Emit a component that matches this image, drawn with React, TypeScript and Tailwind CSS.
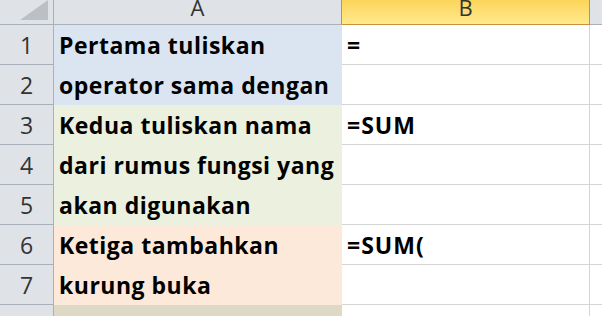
import React from 'react';

const rowNums = [1, 2, 3, 4, 5, 6, 7, 8];

const cellText = 'text-[23px] font-bold leading-[40px] tracking-[0.5px] text-black whitespace-nowrap';

const Sheet = () => {
  return (
    <div
      className="w-[602px] h-[316px] overflow-hidden bg-white"
      style={{ fontFamily: '"Open Sans", "Noto Sans", sans-serif' }}
    >
      {/* column headers */}
      <div className="flex h-[25px]">
        <div className="w-[54px] h-[25px] flex-none flex items-end justify-end pr-[5px] pb-[4px] bg-[#dfe3e8] border-r border-b border-[#a9b0b9]">
          <svg width="28" height="20" viewBox="0 0 28 20">
            <polygon points="28,0 28,20 0,20" fill="#bcc0c5" />
          </svg>
        </div>
        <div className="w-[288px] h-[25px] flex-none flex justify-center bg-[#dfe3e8] border-r border-r-[#c9913a] border-b border-b-[#a9b0b9] overflow-hidden">
          <span className="block text-[22px] leading-[22px] mt-[-4px] text-[#333333]">A</span>
        </div>
        <div className="w-[248px] h-[25px] flex-none flex justify-center bg-gradient-to-b from-[#fcd55a] to-[#ffe98c] border-r border-b border-[#c9913a] overflow-hidden">
          <span className="block text-[22px] leading-[22px] mt-[-4px] text-[#333333]">B</span>
        </div>
        <div className="flex-1 h-[25px] bg-[#dfe3e8] border-b border-[#a9b0b9]" />
      </div>

      {/* body */}
      <div className="grid grid-cols-[54px_288px_248px_12px] grid-rows-[repeat(8,40px)]">
        {rowNums.map((n) => (
          <div
            key={n}
            style={{ gridRow: n, gridColumn: 1 }}
            className="bg-[#dfe3e8] border-r border-b border-[#a9b0b9] text-center text-[23px] leading-[40px] text-[#333333]"
          >
            {n}
          </div>
        ))}

        <div style={{ gridRow: '1 / span 2', gridColumn: 2 }} className={`bg-[#dbe5f1] pl-[5px] ${cellText}`}>
          <div>Pertama tuliskan</div>
          <div>operator sama dengan</div>
        </div>
        <div style={{ gridRow: '3 / span 3', gridColumn: 2 }} className={`bg-[#ebf1de] pl-[5px] ${cellText}`}>
          <div>Kedua tuliskan nama</div>
          <div>dari rumus fungsi yang</div>
          <div>akan digunakan</div>
        </div>
        <div style={{ gridRow: '6 / span 2', gridColumn: 2 }} className={`bg-[#fde9d9] pl-[5px] ${cellText}`}>
          <div>Ketiga tambahkan</div>
          <div>kurung buka</div>
        </div>
        <div style={{ gridRow: 8, gridColumn: 2 }} className={`bg-[#ddd9c4] pl-[5px] ${cellText}`}>
          Keempat masukkan
        </div>

        {rowNums.map((n) => (
          <div
            key={'b' + n}
            style={{ gridRow: n, gridColumn: 3 }}
            className={`border-r border-b border-[#d4d4d4] pl-[5px] overflow-hidden ${cellText} tracking-[1px]`}
          >
            {n === 1 ? '=' : n === 3 ? '=SUM' : n === 6 ? '=SUM(' : n === 8 ? '=SUM(B1:B7)' : ''}
          </div>
        ))}
        {rowNums.map((n) => (
          <div key={'c' + n} style={{ gridRow: n, gridColumn: 4 }} className="border-b border-[#d4d4d4]" />
        ))}
      </div>
    </div>
  );
};

export default function App() {
  return <Sheet />;
}
